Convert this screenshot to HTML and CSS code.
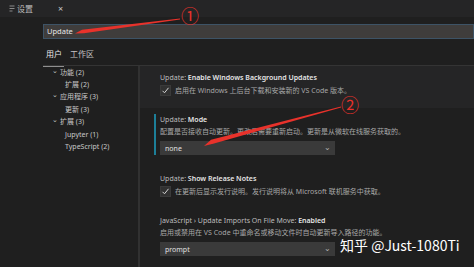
FILE: index.html
```html
<!DOCTYPE html>
<html lang="zh-CN">
<head>
    <meta charset="UTF-8">
    <title>设置</title>
    <link rel="stylesheet" href="styles.css">
</head>
<body>
    <div class="tabbar">
        <div class="tab">
            <svg class="tab-icon" width="6" height="7" viewBox="0 0 6 7">
                <path d="M0.5 1h5M0.5 3.5h5M0.5 6h3" stroke="#8a8a8a" stroke-width="1"/>
            </svg>
            <span>设置</span>
            <span class="close">×</span>
        </div>
    </div>

    <div class="page">
        <div class="search">Update</div>

        <div class="scopes">
            <span class="scope active">用户</span>
            <span class="scope">工作区</span>
        </div>

        <div class="main">
            <ul class="tree">
                <li class="group"><span class="chev">⌄</span>功能 (2)</li>
                <li class="leaf">扩展 (2)</li>
                <li class="group"><span class="chev">⌄</span>应用程序 (3)</li>
                <li class="leaf">更新 (3)</li>
                <li class="group"><span class="chev">⌄</span>扩展 (3)</li>
                <li class="leaf">Jupyter (1)</li>
                <li class="leaf">TypeScript (2)</li>
            </ul>

            <div class="settings">
                <div class="item hover">
                    <div class="inner">
                        <div class="title">Update: <b>Enable Windows Background Updates</b></div>
                        <div class="check-row">
                            <span class="box"><svg width="9" height="9" viewBox="0 0 9 9"><path d="M1.5 4.8l2 2 4-5" fill="none" stroke="#d4d4d4" stroke-width="1"/></svg></span>
                            启用在 Windows 上后台下载和安装新的 VS Code 版本。
                        </div>
                    </div>
                </div>

                <div class="item">
                    <div class="inner focused">
                        <div class="title">Update: <b>Mode</b></div>
                        <div class="desc">配置是否接收自动更新。更改后需要重新启动。更新是从微软在线服务获取的。</div>
                        <div class="select"><span>none</span><span class="arrow">⌄</span></div>
                    </div>
                </div>

                <div class="item">
                    <div class="inner">
                        <div class="title">Update: <b>Show Release Notes</b></div>
                        <div class="check-row">
                            <span class="box"><svg width="9" height="9" viewBox="0 0 9 9"><path d="M1.5 4.8l2 2 4-5" fill="none" stroke="#d4d4d4" stroke-width="1"/></svg></span>
                            在更新后显示发行说明。发行说明将从 Microsoft 联机服务中获取。
                        </div>
                    </div>
                </div>

                <div class="item">
                    <div class="inner">
                        <div class="title">JavaScript › Update Imports On File Move: <b>Enabled</b></div>
                        <div class="desc">启用或禁用在 VS Code 中重命名或移动文件时自动更新导入路径的功能。</div>
                        <div class="select"><span>prompt</span><span class="arrow">⌄</span></div>
                    </div>
                </div>
            </div>
        </div>
    </div>

    <!-- annotations drawn over the screenshot -->
    <svg class="marks" width="474" height="267" viewBox="0 0 474 267">
        <polygon points="180,18.4 180,19.6 84,33.2 75,33.6 82,29.8" fill="#e8322b"/>
        <polygon points="341,106.4 341,107.6 214,143.6 204,146 211,139.8" fill="#e8322b"/>
    </svg>
    <span class="num num1">①</span>
    <span class="num num2">②</span>
    <div class="watermark">知乎 @Just-1080Ti</div>
</body>
</html>
```

FILE: styles.css
```css
body {
    margin: 0;
    width: 474px;
    height: 267px;
    overflow: hidden;
    position: relative;
    background-color: #1f1f1f;
    color: #cccccc;
    font-family: "Noto Sans", "Noto Sans CJK SC", sans-serif;
    font-size: 7px;
}
.tabbar {
    height: 17px;
    background-color: #252526;
    display: flex;
}
.tab {
    display: flex;
    align-items: center;
    padding-left: 9px;
    font-size: 8px;
    color: #bdbdbd;
}
.tab-icon {
    margin-right: 2px;
}
.close {
    margin-left: 25px;
    font-size: 9px;
    color: #c8c8c8;
}
.page {
    margin-left: 43px;
    padding-top: 7px;
}
.search {
    height: 13px;
    line-height: 13px;
    background-color: #3f3d3c;
    border: 1px solid #3d5366;
    padding-left: 3px;
    font-size: 7.5px;
    color: #e8e8e8;
}
.scopes {
    display: flex;
    gap: 8px;
    height: 21px;
    padding-left: 3px;
    border-bottom: 1px solid #343434;
    box-sizing: border-box;
    margin-top: 6px;
}
.scope {
    font-size: 8px;
    line-height: 17px;
    color: #c4c4c4;
    position: relative;
}
.scope.active {
    color: #e8e8e8;
}
.scope.active::after {
    content: "";
    position: absolute;
    left: -3px;
    right: -2px;
    bottom: -2px;
    height: 1px;
    background-color: #8f8f8f;
}
.main {
    display: flex;
    height: 206px;
}
.tree {
    list-style: none;
    margin: 0;
    padding: 0.5px 0 0 0;
    width: 97px;
    border-right: 2px solid #313131;
    box-sizing: border-box;
}
.tree li {
    line-height: 12.4px;
    white-space: nowrap;
    color: #c8c8c8;
}
.group {
    padding-left: 9px;
}
.leaf {
    padding-left: 22px;
}
.chev {
    display: inline-block;
    width: 8px;
    font-size: 7px;
    position: relative;
    top: -2px;
}
.settings {
    flex: 1;
    padding-left: 11px;
}
.item {
    padding: 6px 0 12px 0;
    margin-left: -11px;
    padding-left: 14px;
}
.item.hover {
    background-color: #252526;
}
.inner {
    border-left: 2px solid transparent;
    padding-left: 4px;
}
.inner.focused {
    border-left-color: #1d7f98;
}
.title {
    line-height: 12px;
    color: #bdbdbd;
    white-space: nowrap;
}
.title b {
    font-weight: 600;
    color: #e6e6e6;
}
.desc {
    line-height: 12px;
    color: #a8a8a8;
    white-space: nowrap;
}
.check-row {
    display: flex;
    align-items: center;
    height: 12px;
    color: #a8a8a8;
    white-space: nowrap;
}
.box {
    width: 11px;
    height: 11px;
    box-sizing: border-box;
    background-color: #313131;
    border: 1px solid #3a3a3a;
    display: flex;
    align-items: center;
    justify-content: center;
    margin-right: 4px;
}
.select {
    margin-top: 3px;
    width: 175px;
    height: 14px;
    box-sizing: border-box;
    background-color: #3a3a3a;
    display: flex;
    justify-content: space-between;
    align-items: center;
    padding: 0 4px 0 5px;
    color: #e0e0e0;
    font-size: 7px;
}
.arrow {
    font-size: 8px;
    color: #b0b0b0;
    position: relative;
    top: -2px;
}
.marks {
    position: absolute;
    left: 0;
    top: 0;
}
.num {
    position: absolute;
    color: #e8322b;
    font-size: 18px;
    line-height: 18px;
    font-family: "Noto Sans CJK SC", sans-serif;
}
.num1 {
    left: 181px;
    top: 6px;
}
.num2 {
    left: 341px;
    top: 95px;
}
.watermark {
    position: absolute;
    left: 340px;
    top: 236px;
    font-size: 14px;
    line-height: 18px;
    color: #ffffff;
    font-family: "Noto Sans CJK SC", sans-serif;
    white-space: nowrap;
}
```
